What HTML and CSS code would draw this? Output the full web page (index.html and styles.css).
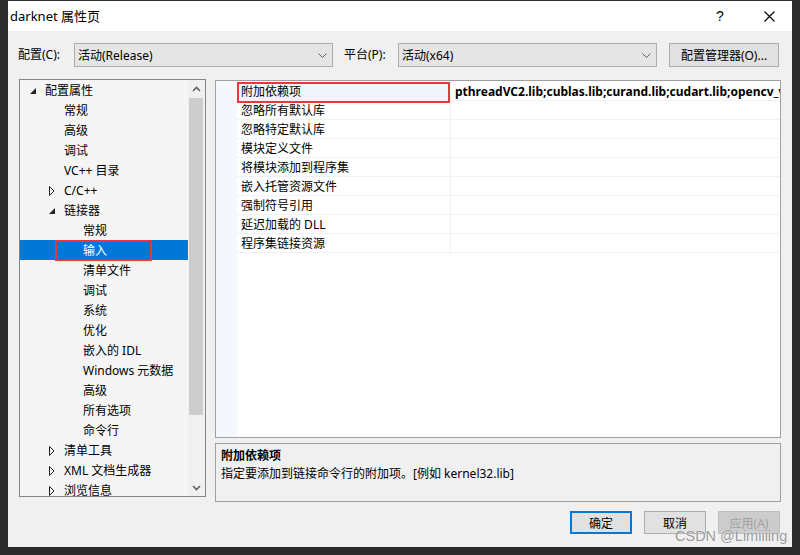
FILE: index.html
```html
<!DOCTYPE html>
<html lang="zh-CN">
<head>
  <meta charset="UTF-8" />
  <title>darknet 属性页</title>
  <link rel="stylesheet" href="styles.css">
</head>
<body>

<div id="dialog">
  <div id="title-bar">
    <div id="title">darknet 属性页</div>
    <div class="title-btn" id="help-btn">?</div>
    <div class="title-btn">
      <svg width="11" height="11" viewBox="0 0 11 11"><path d="M0.5 0.5 L10.5 10.5 M10.5 0.5 L0.5 10.5" stroke="#000" stroke-width="1.1" fill="none"/></svg>
    </div>
  </div>

  <div id="config-row">
    <span class="row-label">配置(C):</span>
    <div class="combo">
      <span>活动(Release)</span>
      <svg class="chev" width="9" height="5" viewBox="0 0 9 5"><path d="M0.5 0.5 L4.5 4.5 L8.5 0.5" stroke="#606060" fill="none"/></svg>
    </div>
    <span class="row-label" id="platform-label">平台(P):</span>
    <div class="combo">
      <span>活动(x64)</span>
      <svg class="chev" width="9" height="5" viewBox="0 0 9 5"><path d="M0.5 0.5 L4.5 4.5 L8.5 0.5" stroke="#606060" fill="none"/></svg>
    </div>
    <div class="btn" id="config-mgr">配置管理器(O)...</div>
  </div>

  <div id="main">
    <div id="tree">
      <div id="tree-items">
        <div class="node lv0"><span class="toggle"><svg width="6" height="6" viewBox="0 0 6 6"><path d="M6 0 L6 6 L0 6 Z" fill="#222"/></svg></span>配置属性</div>
        <div class="node lv1"><span class="toggle"></span>常规</div>
        <div class="node lv1"><span class="toggle"></span>高级</div>
        <div class="node lv1"><span class="toggle"></span>调试</div>
        <div class="node lv1"><span class="toggle"></span>VC++ 目录</div>
        <div class="node lv1"><span class="toggle"><svg width="6" height="10" viewBox="0 0 6 10"><path d="M0.5 0.5 L5 5 L0.5 9.5 Z" stroke="#222" fill="none"/></svg></span>C/C++</div>
        <div class="node lv1"><span class="toggle"><svg width="6" height="6" viewBox="0 0 6 6"><path d="M6 0 L6 6 L0 6 Z" fill="#222"/></svg></span>链接器</div>
        <div class="node lv2"><span class="toggle"></span>常规</div>
        <div class="node lv2 selected"><span class="toggle"></span>输入<span class="mark-box tree-mark"></span></div>
        <div class="node lv2"><span class="toggle"></span>清单文件</div>
        <div class="node lv2"><span class="toggle"></span>调试</div>
        <div class="node lv2"><span class="toggle"></span>系统</div>
        <div class="node lv2"><span class="toggle"></span>优化</div>
        <div class="node lv2"><span class="toggle"></span>嵌入的 IDL</div>
        <div class="node lv2"><span class="toggle"></span>Windows 元数据</div>
        <div class="node lv2"><span class="toggle"></span>高级</div>
        <div class="node lv2"><span class="toggle"></span>所有选项</div>
        <div class="node lv2"><span class="toggle"></span>命令行</div>
        <div class="node lv1"><span class="toggle"><svg width="6" height="10" viewBox="0 0 6 10"><path d="M0.5 0.5 L5 5 L0.5 9.5 Z" stroke="#222" fill="none"/></svg></span>清单工具</div>
        <div class="node lv1"><span class="toggle"><svg width="6" height="10" viewBox="0 0 6 10"><path d="M0.5 0.5 L5 5 L0.5 9.5 Z" stroke="#222" fill="none"/></svg></span>XML 文档生成器</div>
        <div class="node lv1"><span class="toggle"><svg width="6" height="10" viewBox="0 0 6 10"><path d="M0.5 0.5 L5 5 L0.5 9.5 Z" stroke="#222" fill="none"/></svg></span>浏览信息</div>
      </div>
      <div id="tree-scroll">
        <div class="scroll-arrow">
          <svg width="9" height="6" viewBox="0 0 9 6"><path d="M1 5 L4.5 1.5 L8 5" stroke="#606060" stroke-width="1.6" fill="none"/></svg>
        </div>
        <div class="scroll-track"><div class="scroll-thumb"></div></div>
        <div class="scroll-arrow">
          <svg width="9" height="6" viewBox="0 0 9 6"><path d="M1 1 L4.5 4.5 L8 1" stroke="#606060" stroke-width="1.6" fill="none"/></svg>
        </div>
      </div>
    </div>

    <div id="right-side">
      <div id="grid">
        <div class="grid-row">
          <div class="gutter"></div>
          <div class="prop-name current">附加依赖项<span class="mark-box grid-mark"></span></div>
          <div class="prop-value">pthreadVC2.lib;cublas.lib;curand.lib;cudart.lib;opencv_world.lib</div>
        </div>
        <div class="grid-row"><div class="gutter"></div><div class="prop-name">忽略所有默认库</div><div class="prop-value"></div></div>
        <div class="grid-row"><div class="gutter"></div><div class="prop-name">忽略特定默认库</div><div class="prop-value"></div></div>
        <div class="grid-row"><div class="gutter"></div><div class="prop-name">模块定义文件</div><div class="prop-value"></div></div>
        <div class="grid-row"><div class="gutter"></div><div class="prop-name">将模块添加到程序集</div><div class="prop-value"></div></div>
        <div class="grid-row"><div class="gutter"></div><div class="prop-name">嵌入托管资源文件</div><div class="prop-value"></div></div>
        <div class="grid-row"><div class="gutter"></div><div class="prop-name">强制符号引用</div><div class="prop-value"></div></div>
        <div class="grid-row"><div class="gutter"></div><div class="prop-name">延迟加载的 DLL</div><div class="prop-value"></div></div>
        <div class="grid-row"><div class="gutter"></div><div class="prop-name">程序集链接资源</div><div class="prop-value"></div></div>
      </div>

      <div id="desc">
        <div id="desc-title">附加依赖项</div>
        <div id="desc-text">指定要添加到链接命令行的附加项。[例如 kernel32.lib]</div>
      </div>
    </div>
  </div>

  <div id="buttons">
    <div class="btn dlg-btn default">确定</div>
    <div class="btn dlg-btn">取消</div>
    <div class="btn dlg-btn disabled">应用(A)</div>
  </div>
</div>

<div id="watermark">CSDN @Limiiiing</div>

</body>
</html>
```

FILE: styles.css
```css
body {
  margin: 0;
  background: #2b2b2b;
  font-family: "Noto Sans", "Noto Sans CJK SC", sans-serif;
  font-size: 12px;
  color: #000;
  position: relative;
  width: 800px;
  height: 555px;
  overflow: hidden;
}

#dialog {
  margin: 1px 0 0 8px;
  width: 784px;
  height: 546px;
  background: #f0f0f0;
  display: flex;
  flex-direction: column;
}

#title-bar {
  height: 30px;
  background: #fff;
  display: flex;
  align-items: center;
}

#title {
  flex: 1;
  padding-left: 2px;
  font-size: 13px;
  line-height: 28px;
}

.title-btn {
  width: 46px;
  height: 30px;
  display: flex;
  align-items: center;
  justify-content: center;
  font-size: 14px;
  font-family: "Liberation Sans", sans-serif;
}

#help-btn {
  margin-right: 3px;
}

#config-row {
  display: flex;
  align-items: center;
  margin-top: 12px;
  padding-left: 10px;
  height: 24px;
}

.row-label {
  width: 56px;
  line-height: 24px;
}

#platform-label {
  width: 54px;
}

.combo {
  width: 259px;
  height: 24px;
  box-sizing: border-box;
  border: 1px solid #adadad;
  background: #e5e5e5;
  display: flex;
  align-items: center;
  padding: 0 5px 0 3px;
  margin-right: 11px;
}

.combo span {
  flex: 1;
}

.btn {
  box-sizing: border-box;
  border: 1px solid #adadad;
  background: #e1e1e1;
  display: flex;
  align-items: center;
  justify-content: center;
}

#config-mgr {
  width: 110px;
  height: 24px;
  margin-left: 1px;
}

#main {
  display: flex;
  margin-top: 12px;
  padding-left: 11px;
  gap: 9px;
}

#tree {
  width: 187px;
  height: 418px;
  box-sizing: border-box;
  border: 1px solid #828790;
  background: #f5f5f5;
  display: flex;
  overflow: hidden;
}

#tree-items {
  flex: 1;
  overflow: hidden;
}

.node {
  height: 20px;
  box-sizing: border-box;
  padding-top: 2px;
  line-height: 18px;
  display: flex;
  align-items: center;
  white-space: nowrap;
  position: relative;
}

.lv0 { padding-left: 6px; }
.lv1 { padding-left: 25px; }
.lv2 { padding-left: 44px; }

.toggle {
  width: 19px;
  height: 18px;
  display: flex;
  align-items: center;
  padding-left: 4px;
  box-sizing: border-box;
}

.node.selected {
  background: #0078d7;
  color: #fff;
}

.mark-box {
  position: absolute;
  border: 2px solid #e8363a;
  box-sizing: border-box;
  z-index: 2;
}

.tree-mark {
  left: 35px;
  top: 0;
  width: 97px;
  height: 21px;
}

#tree-scroll {
  width: 17px;
  background: #f0f0f0;
  display: flex;
  flex-direction: column;
}

.scroll-arrow {
  height: 17px;
  display: flex;
  align-items: center;
  justify-content: center;
}

.scroll-track {
  flex: 1;
  padding: 1px 2px 0 1px;
}

.scroll-thumb {
  height: 317px;
  background: #cdcdcd;
}

#right-side {
  width: 566px;
  margin-top: 1px;
  display: flex;
  flex-direction: column;
}

#grid {
  height: 358px;
  box-sizing: border-box;
  border: 1px solid #a0a0a0;
  padding-top: 1px;
  background: linear-gradient(to right, #f4f7fc 21px, #fff 21px);
}

.grid-row {
  display: flex;
  height: 19px;
}

.gutter {
  width: 21px;
}

.prop-name {
  width: 214px;
  height: 19px;
  box-sizing: border-box;
  padding-left: 4px;
  line-height: 20px;
  border-bottom: 1px solid #eef1f5;
  border-right: 1px solid #eef1f5;
  background: #fff;
  position: relative;
}

.prop-name.current {
  background: #f1f5fb;
}

.grid-mark {
  left: 0;
  top: 0;
  width: 213px;
  height: 21px;
}

.prop-value {
  flex: 1;
  height: 19px;
  box-sizing: border-box;
  padding-left: 4px;
  line-height: 20px;
  border-bottom: 1px solid #eef1f5;
  font-weight: bold;
  white-space: nowrap;
  overflow: hidden;
}

#desc {
  margin-top: 5px;
  height: 59px;
  box-sizing: border-box;
  border: 1px solid #a0a0a0;
  padding: 3px 5px 2px;
}

#desc-title {
  font-weight: bold;
  line-height: 18px;
}

#desc-text {
  line-height: 18px;
}

#buttons {
  display: flex;
  justify-content: flex-end;
  gap: 12px;
  margin-top: 9px;
  padding-right: 12px;
}

.dlg-btn {
  width: 62px;
  height: 23px;
}

.dlg-btn.default {
  border: 2px solid #0078d7;
}

.dlg-btn.disabled {
  color: #a0a0a0;
  background: #cccccc;
  border-color: #bfbfbf;
}

#watermark {
  position: absolute;
  left: 675px;
  top: 528px;
  font-family: "Liberation Sans", sans-serif;
  font-size: 14.5px;
  color: rgba(140, 140, 140, 0.9);
  text-shadow: 0 0 1px #fff;
}
```
